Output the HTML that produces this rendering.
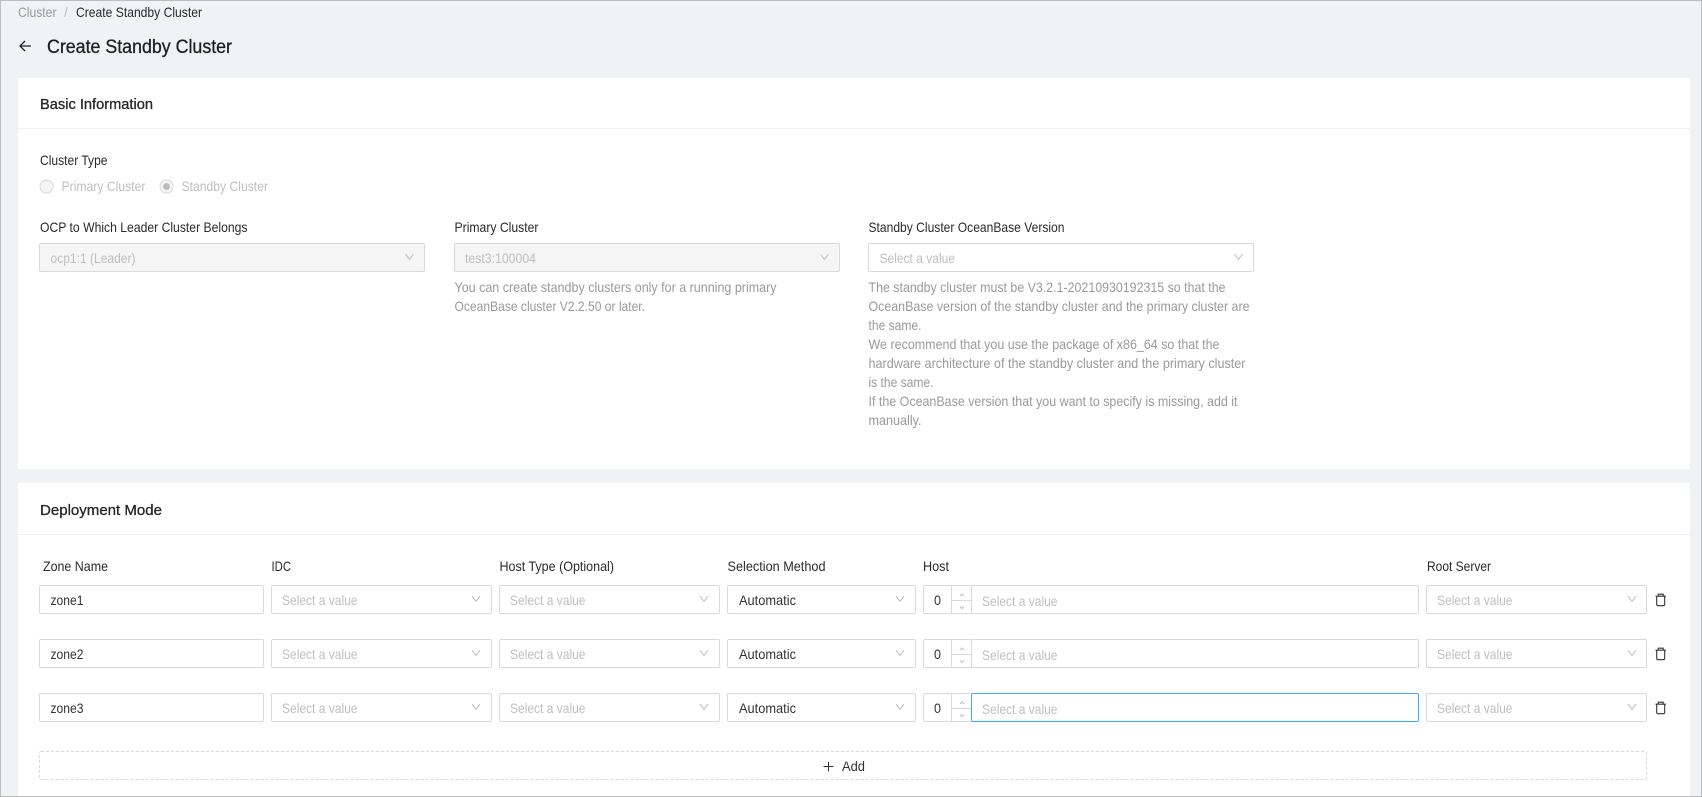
<!DOCTYPE html>
<html lang="en">
<head>
<meta charset="utf-8">
<title>Create Standby Cluster</title>
<style>
html,body{margin:0;padding:0;width:1702px;height:797px;overflow:hidden;background:#f0f2f5}
svg{display:block;position:absolute;left:0;top:0}
text{font-family:"Liberation Sans",Arial,sans-serif;font-size:14px;white-space:pre}
.l{fill:#2b2b2b}
.h{fill:#9a9a9a}
.p{fill:#bfbfbf}
.d{fill:#333}
.t{fill:#262626;font-size:14.5px;stroke:#262626;stroke-width:.3px}
.box{fill:#fff;stroke:#d9d9d9}
.dis{fill:#f5f5f5;stroke:#d9d9d9}
.ch{fill:none;stroke:#bfbfbf;stroke-width:1}
.ic{fill:none;stroke:#333;stroke-width:1.1}
</style>
</head>
<body>
<svg width="1702" height="797" viewBox="0 0 1702 797" xmlns="http://www.w3.org/2000/svg">
<defs>
<path id="c" class="ch" d="M-4 -2.8L0 2.4L4 -2.8"/>
<path id="tr" class="ic" d="M-4 -3.5V4.5Q-4 6 -2.5 6H2.5Q4 6 4 4.5V-3.5M-5.2 -3.5H5.2M-2.5 -3.5V-5.5H2.5V-3.5"/>
</defs>
<rect x="0.5" y="0.5" width="1701" height="796" fill="#f0f2f5" stroke="#bdbdbd"/>

<!-- Breadcrumb + title -->
<text x="18" y="17" class="h" textLength="38.5" lengthAdjust="spacingAndGlyphs">Cluster</text>
<text x="64" y="17" class="p">/</text>
<text x="76" y="17" class="l" textLength="126" lengthAdjust="spacingAndGlyphs">Create Standby Cluster</text>
<path d="M31 46H20M25 41L20 46L25 51" fill="none" stroke="#222" stroke-width="1.3"/>
<text x="47" y="53" textLength="185" lengthAdjust="spacingAndGlyphs" style="font-size:19px;fill:#1f1f1f;stroke:#1f1f1f;stroke-width:.3px">Create Standby Cluster</text>

<!-- Basic Information panel -->
<rect x="18" y="78" width="1672" height="391" fill="#fff"/>
<rect x="18" y="128" width="1672" height="1" fill="#f0f0f0"/>
<text x="40" y="109" class="t" textLength="113" lengthAdjust="spacingAndGlyphs">Basic Information</text>
<text x="40" y="165" class="l" textLength="67.5" lengthAdjust="spacingAndGlyphs">Cluster Type</text>
<circle cx="46.5" cy="186.5" r="6.5" class="dis"/>
<text x="61.5" y="191" class="p" textLength="84" lengthAdjust="spacingAndGlyphs">Primary Cluster</text>
<circle cx="166.5" cy="186.5" r="6.5" class="dis"/>
<circle cx="166.5" cy="186.5" r="3.5" fill="#bdbdbd"/>
<text x="181.5" y="191" class="p" textLength="86.5" lengthAdjust="spacingAndGlyphs">Standby Cluster</text>

<text x="40" y="232" class="l" textLength="207.5" lengthAdjust="spacingAndGlyphs">OCP to Which Leader Cluster Belongs</text>
<rect x="39.5" y="243.5" width="385" height="28" rx="1.5" class="dis"/>
<text x="50.5" y="263" class="p" textLength="85" lengthAdjust="spacingAndGlyphs">ocp1:1 (Leader)</text>
<use href="#c" x="409.5" y="257"/>

<text x="454.5" y="232" class="l" textLength="84" lengthAdjust="spacingAndGlyphs">Primary Cluster</text>
<rect x="454.5" y="243.5" width="385" height="28" rx="1.5" class="dis"/>
<text x="465" y="263" class="p" textLength="71" lengthAdjust="spacingAndGlyphs">test3:100004</text>
<use href="#c" x="824.5" y="257"/>
<text x="454.5" y="292" class="h" textLength="322" lengthAdjust="spacingAndGlyphs">You can create standby clusters only for a running primary</text>
<text x="454.5" y="311" class="h" textLength="190.5" lengthAdjust="spacingAndGlyphs">OceanBase cluster V2.2.50 or later.</text>

<text x="868.5" y="232" class="l" textLength="196" lengthAdjust="spacingAndGlyphs">Standby Cluster OceanBase Version</text>
<rect x="868.5" y="243.5" width="385" height="28" rx="1.5" class="box"/>
<text x="879.5" y="263" class="p" textLength="75.5" lengthAdjust="spacingAndGlyphs">Select a value</text>
<use href="#c" x="1238.5" y="257"/>
<text x="868.5" y="292" class="h" textLength="357" lengthAdjust="spacingAndGlyphs">The standby cluster must be V3.2.1-20210930192315 so that the</text>
<text x="868.5" y="311" class="h" textLength="381" lengthAdjust="spacingAndGlyphs">OceanBase version of the standby cluster and the primary cluster are</text>
<text x="868.5" y="330" class="h" textLength="53" lengthAdjust="spacingAndGlyphs">the same.</text>
<text x="868.5" y="349" class="h" textLength="351" lengthAdjust="spacingAndGlyphs">We recommend that you use the package of x86_64 so that the</text>
<text x="868.5" y="368" class="h" textLength="377" lengthAdjust="spacingAndGlyphs">hardware architecture of the standby cluster and the primary cluster</text>
<text x="868.5" y="387" class="h" textLength="65" lengthAdjust="spacingAndGlyphs">is the same.</text>
<text x="868.5" y="406" class="h" textLength="369" lengthAdjust="spacingAndGlyphs">If the OceanBase version that you want to specify is missing, add it</text>
<text x="868.5" y="425" class="h" textLength="53" lengthAdjust="spacingAndGlyphs">manually.</text>

<!-- Deployment Mode panel -->
<rect x="18" y="483" width="1672" height="313" fill="#fff"/>
<rect x="18" y="534" width="1672" height="1" fill="#f0f0f0"/>
<text x="40" y="515" class="t" textLength="122" lengthAdjust="spacingAndGlyphs">Deployment Mode</text>

<text x="43" y="571" class="l" textLength="65" lengthAdjust="spacingAndGlyphs">Zone Name</text>
<text x="271.5" y="571" class="l" textLength="19.5" lengthAdjust="spacingAndGlyphs">IDC</text>
<text x="499.5" y="571" class="l" textLength="114.5" lengthAdjust="spacingAndGlyphs">Host Type (Optional)</text>
<text x="727.5" y="571" class="l" textLength="98" lengthAdjust="spacingAndGlyphs">Selection Method</text>
<text x="923" y="571" class="l" textLength="26" lengthAdjust="spacingAndGlyphs">Host</text>
<text x="1427" y="571" class="l" textLength="64" lengthAdjust="spacingAndGlyphs">Root Server</text>

<!-- Row 1 -->
<g transform="translate(0,585)">
<rect x="39.5" y=".5" width="224" height="28" rx="1.5" class="box"/>
<text x="50.5" y="20" class="d" textLength="33" lengthAdjust="spacingAndGlyphs">zone1</text>
<rect x="271.5" y=".5" width="220" height="28" rx="1.5" class="box"/>
<text x="282" y="20" class="p" textLength="75.5" lengthAdjust="spacingAndGlyphs">Select a value</text>
<use href="#c" x="476" y="14"/>
<rect x="499.5" y=".5" width="220" height="28" rx="1.5" class="box"/>
<text x="510" y="20" class="p" textLength="75.5" lengthAdjust="spacingAndGlyphs">Select a value</text>
<use href="#c" x="704" y="14"/>
<rect x="727.5" y=".5" width="188" height="28" rx="1.5" class="box"/>
<text x="739" y="20" class="d" textLength="57" lengthAdjust="spacingAndGlyphs">Automatic</text>
<use href="#c" x="900" y="14"/>
<rect x="923.5" y=".5" width="48" height="28" rx="1.5" class="box"/>
<path d="M951.5 .5V28.5M951.5 15.5H971.5" stroke="#d9d9d9" fill="none"/>
<path d="M960 11L962 9L964 11M960 21.5L962 23.5L964 21.5" stroke="#bfbfbf" fill="none"/>
<text x="934" y="20" class="d" textLength="7" lengthAdjust="spacingAndGlyphs">0</text>
<rect x="971.5" y=".5" width="447" height="28" rx="1.5" class="box"/>
<text x="982" y="21" class="p" textLength="75.5" lengthAdjust="spacingAndGlyphs">Select a value</text>
<rect x="1426.5" y=".5" width="220" height="28" rx="1.5" class="box"/>
<text x="1437" y="20" class="p" textLength="75.5" lengthAdjust="spacingAndGlyphs">Select a value</text>
<use href="#c" x="1632" y="14"/>
<use href="#tr" x="1660.7" y="14.7"/>
</g>

<!-- Row 2 -->
<g transform="translate(0,639)">
<rect x="39.5" y=".5" width="224" height="28" rx="1.5" class="box"/>
<text x="50.5" y="20" class="d" textLength="33" lengthAdjust="spacingAndGlyphs">zone2</text>
<rect x="271.5" y=".5" width="220" height="28" rx="1.5" class="box"/>
<text x="282" y="20" class="p" textLength="75.5" lengthAdjust="spacingAndGlyphs">Select a value</text>
<use href="#c" x="476" y="14"/>
<rect x="499.5" y=".5" width="220" height="28" rx="1.5" class="box"/>
<text x="510" y="20" class="p" textLength="75.5" lengthAdjust="spacingAndGlyphs">Select a value</text>
<use href="#c" x="704" y="14"/>
<rect x="727.5" y=".5" width="188" height="28" rx="1.5" class="box"/>
<text x="739" y="20" class="d" textLength="57" lengthAdjust="spacingAndGlyphs">Automatic</text>
<use href="#c" x="900" y="14"/>
<rect x="923.5" y=".5" width="48" height="28" rx="1.5" class="box"/>
<path d="M951.5 .5V28.5M951.5 15.5H971.5" stroke="#d9d9d9" fill="none"/>
<path d="M960 11L962 9L964 11M960 21.5L962 23.5L964 21.5" stroke="#bfbfbf" fill="none"/>
<text x="934" y="20" class="d" textLength="7" lengthAdjust="spacingAndGlyphs">0</text>
<rect x="971.5" y=".5" width="447" height="28" rx="1.5" class="box"/>
<text x="982" y="21" class="p" textLength="75.5" lengthAdjust="spacingAndGlyphs">Select a value</text>
<rect x="1426.5" y=".5" width="220" height="28" rx="1.5" class="box"/>
<text x="1437" y="20" class="p" textLength="75.5" lengthAdjust="spacingAndGlyphs">Select a value</text>
<use href="#c" x="1632" y="14"/>
<use href="#tr" x="1660.7" y="14.7"/>
</g>

<!-- Row 3 -->
<g transform="translate(0,693)">
<rect x="39.5" y=".5" width="224" height="28" rx="1.5" class="box"/>
<text x="50.5" y="20" class="d" textLength="33" lengthAdjust="spacingAndGlyphs">zone3</text>
<rect x="271.5" y=".5" width="220" height="28" rx="1.5" class="box"/>
<text x="282" y="20" class="p" textLength="75.5" lengthAdjust="spacingAndGlyphs">Select a value</text>
<use href="#c" x="476" y="14"/>
<rect x="499.5" y=".5" width="220" height="28" rx="1.5" class="box"/>
<text x="510" y="20" class="p" textLength="75.5" lengthAdjust="spacingAndGlyphs">Select a value</text>
<use href="#c" x="704" y="14"/>
<rect x="727.5" y=".5" width="188" height="28" rx="1.5" class="box"/>
<text x="739" y="20" class="d" textLength="57" lengthAdjust="spacingAndGlyphs">Automatic</text>
<use href="#c" x="900" y="14"/>
<rect x="923.5" y=".5" width="48" height="28" rx="1.5" class="box"/>
<path d="M951.5 .5V28.5M951.5 15.5H971.5" stroke="#d9d9d9" fill="none"/>
<path d="M960 11L962 9L964 11M960 21.5L962 23.5L964 21.5" stroke="#bfbfbf" fill="none"/>
<text x="934" y="20" class="d" textLength="7" lengthAdjust="spacingAndGlyphs">0</text>
<rect x="971.5" y=".5" width="447" height="28" rx="1.5" fill="#fff" stroke="#40a9ff"/>
<text x="982" y="21" class="p" textLength="75.5" lengthAdjust="spacingAndGlyphs">Select a value</text>
<rect x="1426.5" y=".5" width="220" height="28" rx="1.5" class="box"/>
<text x="1437" y="20" class="p" textLength="75.5" lengthAdjust="spacingAndGlyphs">Select a value</text>
<use href="#c" x="1632" y="14"/>
<use href="#tr" x="1660.7" y="14.7"/>
</g>

<!-- Add -->
<rect x="39.5" y="751.5" width="1607" height="28" rx="1.5" fill="#fff" stroke="#d9d9d9" stroke-dasharray="3 2"/>
<path d="M828.5 762V771.5M823.5 766.5H833.5" stroke="#333" fill="none"/>
<text x="842" y="771" class="d" textLength="23" lengthAdjust="spacingAndGlyphs">Add</text>
</svg>
</body>
</html>
